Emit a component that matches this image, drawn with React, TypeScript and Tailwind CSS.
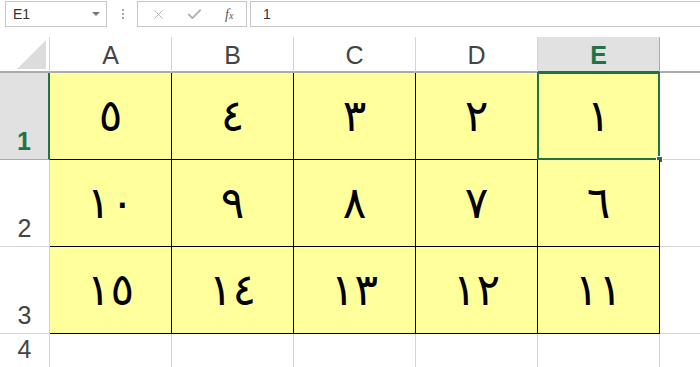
import { Fragment } from 'react';
import { X, Check } from 'lucide-react';

const cols = ['A', 'B', 'C', 'D', 'E'];
const rows = [
  ['٥', '٤', '٣', '٢', '١'],
  ['١٠', '٩', '٨', '٧', '٦'],
  ['١٥', '١٤', '١٣', '١٢', '١١'],
];

export default function App() {
  return (
    <div className="w-[700px] h-[367px] overflow-hidden bg-white font-['Liberation_Sans',sans-serif]">
      {/* Formula bar */}
      <div className="flex items-center h-[27px] pt-[1px] pl-[5px]">
        <div className="flex items-center justify-between w-[102px] h-[26px] border border-[#c6c6c6] pl-[7px] pr-[6px]">
          <span className="text-[14px] text-[#333]">E1</span>
          <span className="w-0 h-0 border-l-[4px] border-r-[4px] border-t-[4px] border-l-transparent border-r-transparent border-t-[#777]" />
        </div>
        <div className="flex flex-col gap-[2px] ml-[15px] mr-[13px]">
          <span className="w-[2px] h-[2px] bg-[#a6a6a6]" />
          <span className="w-[2px] h-[2px] bg-[#a6a6a6]" />
          <span className="w-[2px] h-[2px] bg-[#a6a6a6]" />
        </div>
        <div className="flex items-center w-[110px] h-[26px] border border-[#c6c6c6] pl-[13px]">
          <X className="w-[15px] h-[15px] text-[#b0b0b0]" strokeWidth={1.5} />
          <Check className="w-[17px] h-[17px] text-[#b0b0b0] ml-[20px]" strokeWidth={2.5} />
          <span className="ml-[22px] text-[14px] italic text-[#555] font-['Liberation_Serif',serif]">
            f<span className="text-[10px]">x</span>
          </span>
        </div>
        <div className="flex items-center flex-1 h-[26px] border border-r-0 border-[#c6c6c6] ml-[3px] pl-[12px]">
          <span className="text-[14px] text-[#333]">1</span>
        </div>
      </div>

      {/* Grid */}
      <div className="mt-[10px] grid grid-cols-[50px_repeat(5,122px)_1fr] grid-rows-[36px_87px_87px_87px_40px]">
        {/* Corner */}
        <div className="relative bg-white border-r border-[#d4d4d4] border-b-2 border-b-[#ababab]">
          <svg className="absolute right-[3px] bottom-[2px]" width="29" height="29" viewBox="0 0 29 29">
            <polygon points="29,0 29,29 0,29" fill="#dcdcdc" />
          </svg>
        </div>
        {cols.map((c) =>
          c === 'E' ? (
            <div
              key={c}
              className="flex items-end justify-center pb-[3px] leading-none bg-[#e1e1e1] border-r border-[#ababab] border-b-2 border-b-[#217346] text-[25px] font-bold text-[#217346]"
            >
              {c}
            </div>
          ) : (
            <div
              key={c}
              className="flex items-end justify-center pb-[3px] leading-none bg-white border-r border-[#d4d4d4] border-b-2 border-b-[#ababab] text-[25px] text-[#444]"
            >
              {c}
            </div>
          )
        )}
        <div className="border-b-2 border-b-[#ababab]" />

        {rows.map((r, ri) => (
          <Fragment key={ri}>
            <div
              className={
                ri === 0
                  ? 'flex items-end justify-center pb-[5px] leading-none bg-[#e1e1e1] border-r-2 border-r-[#217346] border-b border-[#ababab] text-[25px] font-bold text-[#217346]'
                  : 'flex items-end justify-center pb-[5px] leading-none bg-white border-r border-[#c8c8d8] border-b border-[#d4d4d4] text-[25px] text-[#444]'
              }
            >
              {ri + 1}
            </div>
            {r.map((v, ci) => (
              <div
                key={ci}
                className="relative flex items-center justify-center bg-[#ffff9c] border-r border-b border-black font-['DejaVu_Sans',sans-serif] text-[44px] text-black leading-none"
              >
                <span dir="rtl">{v}</span>
                {ri === 0 && ci === 4 && (
                  <>
                    <div className="absolute -left-[1px] -top-[1px] -right-[1px] -bottom-[1px] border-2 border-[#217346]" />
                    <div className="absolute -right-[4px] -bottom-[4px] w-[7px] h-[7px] bg-[#217346] border border-white" />
                  </>
                )}
              </div>
            ))}
            <div className="border-b border-[#d4d4d4]" />
          </Fragment>
        ))}

        {/* Row 4 */}
        <div className="flex items-start justify-center pt-[3px] leading-none bg-white border-r border-[#d4d4d4] text-[25px] text-[#444]">
          4
        </div>
        {cols.map((c) => (
          <div key={`r4${c}`} className="border-r border-[#d4d4d4]" />
        ))}
        <div />
      </div>
    </div>
  );
}
